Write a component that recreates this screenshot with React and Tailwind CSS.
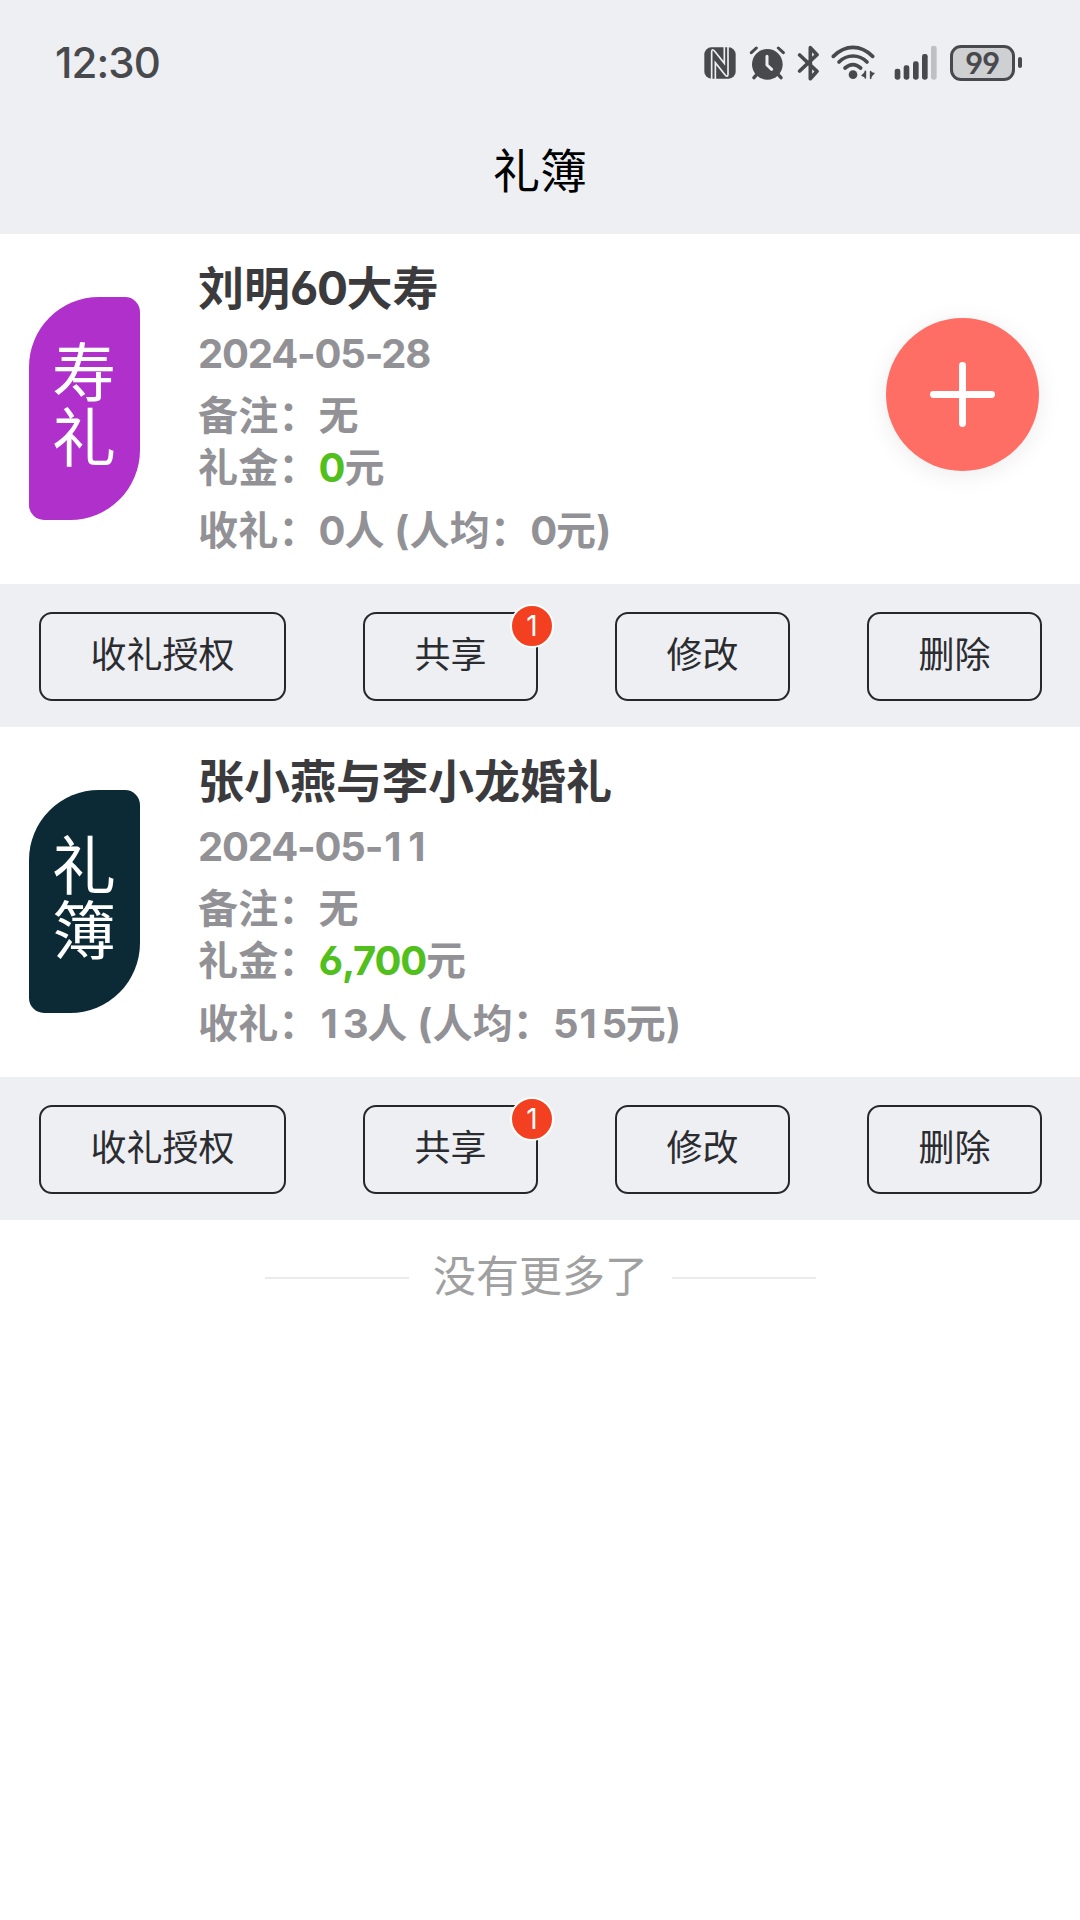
import React from 'react';

const books = [
  {
    id: 1,
    tag: '寿礼',
    tagColor: 'bg-[#b030cb]',
    title: '刘明60大寿',
    date: '2024-05-28',
    remark: '无',
    amount: '0',
    people: '0',
    average: '0',
    shared: 1
  },
  {
    id: 2,
    tag: '礼簿',
    tagColor: 'bg-[#0b2a36]',
    title: '张小燕与李小龙婚礼',
    date: '2024-05-11',
    remark: '无',
    amount: '6,700',
    people: '13',
    average: '515',
    shared: 1
  }
];

// Sets digits tighter than the Chinese characters around them,
// and gives the narrow "1" the same width as the other digits
const Digits = ({ children }) =>
  children.split(/(1|[02-9,-]+)/).map((part, index) => {
    if (part === '1') {
      return (
        <span key={index} className="ml-[2px] mr-[6px] tracking-[-0.03em]">
          1
        </span>
      );
    }
    return /\d|-/.test(part) ? (
      <span key={index} className="tracking-[-0.03em]">
        {part}
      </span>
    ) : (
      part
    );
  });

const StatusBar = () => (
  <div className="flex h-[125px] items-center justify-between pl-[55px] pr-[58px] text-[#48494d]">
    <span className="text-[42px] font-medium leading-none tracking-[-0.9px]">12:30</span>

    <div className="flex items-center">
      {/* NFC */}
      <svg className="h-8 w-8" viewBox="0 0 96 96" fill="none">
        <rect x="1" y="1" width="94" height="94" rx="21" fill="currentColor" />
        <path
          d="M23 96V14Q24 3 32 13L61 49V0M72 0V82Q71 93 63 83L34 47V96"
          stroke="#eeeff3"
          strokeWidth="5"
        />
      </svg>

      {/* Alarm */}
      <svg className="ml-[13px] h-[34px] w-[37px]" viewBox="0 0 111 102" fill="none" stroke="currentColor" strokeLinecap="round">
        <circle cx="55" cy="55" r="46" fill="currentColor" stroke="none" />
        <path d="M7 20L22 6M103 20L88 6" strokeWidth="9" />
        <path d="M23 86l-8 9M88 86l8 9" strokeWidth="10" />
        <path d="M54 31v26l14 13" stroke="#eeeff3" strokeWidth="9" strokeLinejoin="round" />
      </svg>

      {/* Bluetooth */}
      <svg className="ml-[11px] h-9 w-[23px]" viewBox="0 0 69 108" fill="none" stroke="currentColor" strokeWidth="11" strokeLinecap="round" strokeLinejoin="round">
        <path d="M8 30l52 49-20 22V8l20 21L8 78" />
      </svg>

      {/* Wi-Fi */}
      <svg className="ml-[11px] h-[35px] w-[44px]" viewBox="0 0 132 105" fill="none" stroke="currentColor" strokeLinecap="round">
        <path d="M7 34Q34 7 66 7t59 27" strokeWidth="11" />
        <path d="M24 51Q42 33 66 33t42 18" strokeWidth="11" />
        <path d="M42 69q24-20 47 0" strokeWidth="11" />
        <circle cx="66" cy="89" r="13" fill="currentColor" stroke="none" />
        <path d="M104 78v20l-14-6zM118 80v20l14-16z" fill="currentColor" stroke="none" />
        <path d="M103 79v20M119 80v20" strokeWidth="5" />
      </svg>

      {/* Signal */}
      <svg className="ml-[19px] h-9 w-[44px]" viewBox="0 0 132 108" fill="currentColor">
        <rect x="2" y="71" width="17" height="33" rx="7" />
        <rect x="29" y="61" width="17" height="43" rx="7" />
        <rect x="57" y="49" width="17" height="55" rx="7" />
        <rect x="84" y="27" width="17" height="77" rx="7" />
        <rect x="111" y="2" width="17" height="102" rx="7" fill="#bfc0c3" />
      </svg>

      {/* Battery */}
      <div className="ml-[12px] flex h-9 w-[65px] items-center justify-center rounded-[11px] border-[3px] border-[#48494d] bg-[#cfd0d2] pr-px text-[30px] font-semibold leading-none tracking-[-1px]">
        99
      </div>
      <div className="ml-[3px] h-[11px] w-1 rounded-full bg-[#48494d]" />
    </div>
  </div>
);

const Tag = ({ text, color }) => (
  <div
    className={`ml-[29px] mt-[63px] flex h-[223px] w-[111px] shrink-0 items-center justify-center rounded-bl-[15px] rounded-br-[70px] rounded-tl-[70px] rounded-tr-[15px] pb-[7px] text-[64px] leading-[65px] text-white ${color}`}
  >
    <span className="w-[65px] break-all">{text}</span>
  </div>
);

const ActionButton = ({ label, badge, wide }) => (
  <button
    className={`relative flex h-[89px] items-center justify-center rounded-[13px] border-2 border-[#26272c] pb-[3px] text-[36px] text-[#2b2c30] ${
      wide ? 'w-[247px]' : 'w-[175px]'
    }`}
  >
    {label}
    {badge && (
      <span className="absolute -right-[18px] -top-[10px] flex h-[44px] w-[44px] items-center justify-center rounded-full border-2 border-white bg-[#f24020] text-[28px] leading-none text-white">
        {badge}
      </span>
    )}
  </button>
);

const BookItem = ({ book }) => (
  <div>
    <div className="flex h-[350px] items-start bg-white">
      <Tag text={book.tag} color={book.tagColor} />
      <div className="ml-[58px] whitespace-pre pt-[22px] text-[40px] font-bold tracking-[0.2px] text-[#919196]">
        <div className="text-[46px] leading-[64px] tracking-normal text-[#3b3b3e]">
          <Digits>{book.title}</Digits>
        </div>
        <div className="pt-px leading-[66px]">
          <Digits>{book.date}</Digits>
        </div>
        <div className="leading-[58px]">备注：{book.remark}</div>
        <div className="leading-[46px]">
          礼金：
          <span className="text-[#52c01c]">
            <Digits>{book.amount}</Digits>
          </span>
          元
        </div>
        <div className="leading-[80px]">
          <Digits>{`收礼：${book.people}人 (人均：${book.average}元)`}</Digits>
        </div>
      </div>
    </div>

    <div className="flex h-[143px] items-start gap-[77px] bg-[#eeeff3] pl-[39px] pt-[28px]">
      <ActionButton label="收礼授权" wide />
      <ActionButton label="共享" badge={book.shared} />
      <ActionButton label="修改" />
      <ActionButton label="删除" />
    </div>
  </div>
);

const App = () => {
  return (
    <div
      lang="zh-CN"
      className="relative h-[1920px] w-[1080px] overflow-hidden bg-white font-[Inter,'Noto_Sans_CJK_SC',sans-serif] [font-feature-settings:'cv03','cv04']"
    >
      <header className="h-[234px] bg-[#eeeff3]">
        <StatusBar />
        <h1 className="text-center text-[47px] leading-[92px] text-black">礼簿</h1>
      </header>

      <main>
        {books.map((book) => (
          <BookItem key={book.id} book={book} />
        ))}

        <div className="flex items-center justify-center gap-[24px] pl-px pt-[24px] text-[43px] leading-[64px] text-[#a0a0a0]">
          <span className="mt-[3px] h-[2px] w-[144px] bg-[#ebebeb]" />
          没有更多了
          <span className="mt-[3px] h-[2px] w-[144px] bg-[#ebebeb]" />
        </div>
      </main>

      {/* Floating add button */}
      <button className="absolute right-[41px] top-[318px] flex h-[153px] w-[153px] items-center justify-center rounded-full bg-[#ff6e65] shadow-[0_4px_24px_rgba(0,0,0,0.08)]">
        <svg className="h-[65px] w-[65px]" viewBox="0 0 66 66" stroke="#fff" strokeWidth="7" strokeLinecap="round">
          <path d="M33 3.5v59M3.5 33h59" />
        </svg>
      </button>
    </div>
  );
};

export default App;
